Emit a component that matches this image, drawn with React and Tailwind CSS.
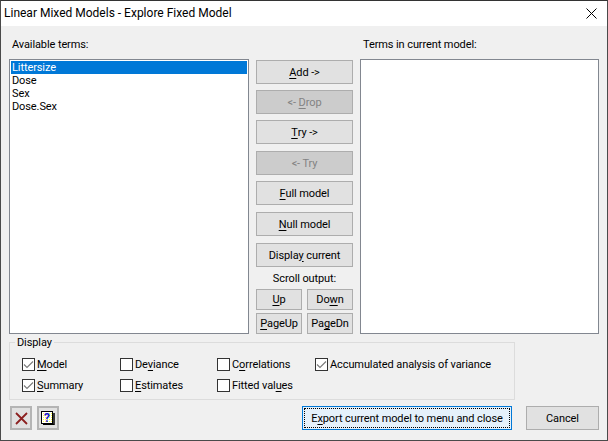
import React from 'react';

const Btn = ({ children, disabled, className = '' }) => (
  <div
    className={`flex items-center justify-center border border-[#adadad] whitespace-pre ${
      disabled ? 'bg-[#cccccc] text-[#838383]' : 'bg-[#e1e1e1] text-black'
    } ${className}`}
  >
    {children}
  </div>
);

const U = ({ children }) => <span className="underline underline-offset-2 decoration-1">{children}</span>;

const Check = ({ checked, children, className = '' }) => (
  <div className={`flex items-center h-[13px] ${className}`}>
    <div className="w-[13px] h-[13px] border border-[#333333] bg-white shrink-0">
      {checked && (
        <svg viewBox="0 0 11 11" className="w-[11px] h-[11px]">
          <path d="M1 5.5 L4 8.5 L10 2.5" fill="none" stroke="#7a7a7a" strokeWidth="1.1" />
        </svg>
      )}
    </div>
    <div className="ml-[2px] whitespace-pre">{children}</div>
  </div>
);

export default function App() {
  return (
    <div className="w-[608px] h-[441px] flex flex-col bg-[#f0f0f0] border border-[#4a4a4a] border-t-[#333333] text-[11px] tracking-[-0.1px] leading-[13px] text-black font-['Roboto',sans-serif] overflow-hidden">
      {/* Title bar */}
      <div className="h-[25px] bg-white flex items-center justify-between shrink-0 pl-[3px] pr-[10px]">
        <div className="text-[12px] tracking-normal">Linear Mixed Models - Explore Fixed Model</div>
        <svg width="11" height="11" viewBox="0 0 11 11">
          <path d="M0.5 0.5 L10.5 10.5 M10.5 0.5 L0.5 10.5" stroke="#000" strokeWidth="1" fill="none" />
        </svg>
      </div>

      {/* Main part */}
      <div className="flex pl-[8px] mt-[11px] h-[297px] shrink-0">
        <div className="w-[240px] flex flex-col">
          <div className="pl-[3px] pt-[1px] h-[22px]">Available terms:</div>
          <div className="flex-1 bg-white border border-[#828790] p-[1px]">
            <div className="h-[13px] bg-[#0078d7] text-white pl-[1px] flex items-center">Littersize</div>
            <div className="h-[13px] pl-[1px] flex items-center">Dose</div>
            <div className="h-[13px] pl-[1px] flex items-center">Sex</div>
            <div className="h-[13px] pl-[1px] flex items-center">Dose.Sex</div>
          </div>
        </div>

        <div className="w-[97px] ml-[7px] mt-[23px] flex flex-col">
          <Btn className="h-[24px] mb-[6px]"><U>A</U>dd -&gt;</Btn>
          <Btn disabled className="h-[24px] mb-[6px]">&lt;- <U>D</U>rop</Btn>
          <Btn className="h-[24px] mb-[7px]"><U>T</U>ry -&gt;</Btn>
          <Btn disabled className="h-[24px] mb-[6px]">&lt;- Try</Btn>
          <Btn className="h-[24px] mb-[7px]"><U>F</U>ull model</Btn>
          <Btn className="h-[24px] mb-[7px]"><U>N</U>ull model</Btn>
          <Btn className="h-[24px]">Displa<U>y</U> current</Btn>
          <div className="h-[22px] flex items-center justify-center">Scroll output:</div>
          <div className="grid grid-cols-[46px_46px] gap-x-[5px] gap-y-[3px]">
            <Btn className="h-[21px]"><U>U</U>p</Btn>
            <Btn className="h-[21px]">Do<U>w</U>n</Btn>
            <Btn className="h-[21px]"><U>P</U>ageUp</Btn>
            <Btn className="h-[21px]">Pa<U>g</U>eDn</Btn>
          </div>
        </div>

        <div className="w-[239px] ml-[7px] flex flex-col">
          <div className="pl-[3px] pt-[1px] h-[22px]">Terms in current model:</div>
          <div className="flex-1 bg-white border border-[#828790]" />
        </div>
      </div>

      {/* Display group */}
      <div className="relative ml-[8px] mt-[8px] w-[506px] h-[58px] border border-[#dcdcdc] shrink-0 pl-[12px] pt-[15px]">
        <div className="absolute left-[5px] top-[-7px] px-[2px] bg-[#f0f0f0]">Display</div>
        <div className="grid grid-cols-[98px_97px_98px_180px] gap-y-[8px]">
          <Check checked><U>M</U>odel</Check>
          <Check>De<U>v</U>iance</Check>
          <Check>C<U>o</U>rrelations</Check>
          <Check checked>Accumulated analysis of variance</Check>
          <Check checked><U>S</U>ummary</Check>
          <Check><U>E</U>stimates</Check>
          <Check>Fitted val<U>u</U>es</Check>
        </div>
      </div>

      {/* Bottom buttons */}
      <div className="flex items-start ml-[9px] mt-[6px]">
        <Btn className="w-[22px] h-[24px] border-2 border-[#b4b4b4]">
          <svg width="13" height="13" viewBox="0 0 13 13">
            <path d="M1 1 L12 12 M12 1 L1 12" stroke="#8c2020" strokeWidth="1.8" fill="none" />
          </svg>
        </Btn>
        <Btn className="w-[22px] h-[24px] ml-[5px] border-2 border-[#b4b4b4]">
          <svg width="14" height="14" viewBox="0 0 14 14">
            <defs>
              <pattern id="dither" width="2" height="2" patternUnits="userSpaceOnUse">
                <rect width="2" height="2" fill="#ffffff" />
                <rect width="1" height="1" fill="#ffff40" />
              </pattern>
            </defs>
            <rect x="0.5" y="0.5" width="11" height="12" fill="url(#dither)" stroke="#000" />
            <path d="M13 2 V13.5 H2" fill="none" stroke="#000" strokeWidth="1.5" />
            <text x="6" y="10.5" textAnchor="middle" fontSize="12" fontWeight="700" fill="#1414d0" fontFamily="Roboto, sans-serif">?</text>
          </svg>
        </Btn>
        <div className="w-[210px] h-[24px] ml-[243px] border border-[#0078d7] bg-[#e5f1fb] p-[1px]">
          <div className="h-full flex items-center justify-center border border-dotted border-black whitespace-pre">
            E<U>x</U>port current model to menu and close
          </div>
        </div>
        <Btn className="w-[73px] h-[24px] ml-[14px]">Cancel</Btn>
      </div>
    </div>
  );
}
